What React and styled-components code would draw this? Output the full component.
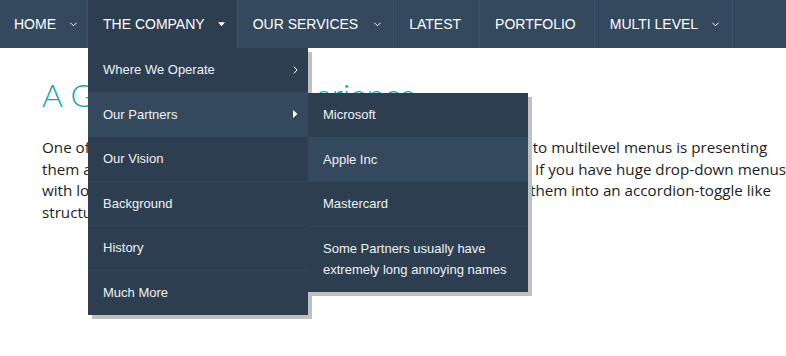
import React from "react";
import styled, { createGlobalStyle } from "styled-components";

const Global = createGlobalStyle`
  html, body { margin: 0; padding: 0; background: #fff; }
  body { font-family: "Liberation Sans", Arial, sans-serif; overflow: hidden; }
  * { box-sizing: border-box; }
`;

const Page = styled.div`
  width: 786px;
  height: 356px;
  position: relative;
  overflow: hidden;
`;

const NavBar = styled.nav`
  height: 48px;
  background: #34495e;
  display: flex;
  position: relative;
  z-index: 5;
`;

const NavItem = styled.div`
  position: relative;
  display: flex;
  align-items: center;
  height: 48px;
  padding: 0 ${(p) => p.$pr}px 0 ${(p) => p.$pl || 15}px;
  border-right: 1px solid #3f546a;
  background: ${(p) => (p.$active ? "#2d3e50" : "transparent")};
  color: #fff;
  font-size: 14px;
  text-transform: uppercase;
  white-space: nowrap;
`;

const Caret = styled.span`
  display: flex;
  align-items: center;
  justify-content: center;
  width: 7px;
  margin-left: ${(p) => p.$gap}px;
`;

const Dropdown = styled.div`
  position: absolute;
  top: ${(p) => p.$top}px;
  left: ${(p) => p.$left}px;
  width: 220px;
  background: #2d3e50;
  box-shadow: 4px 4px 0 #c0c0c0;
  z-index: ${(p) => p.$z || 10};
  text-transform: none;
`;

const MenuItem = styled.div`
  position: relative;
  display: flex;
  align-items: center;
  justify-content: space-between;
  padding: 11.5px 10px 11.5px 15px;
  line-height: 21px;
  font-size: 13px;
  color: #eef2f5;
  background: ${(p) => (p.$hover ? "#34495e" : "transparent")};
  border-bottom: ${(p) => (p.$last ? "none" : "1px solid #34475b")};
  height: ${(p) => (p.$tall ? "auto" : "44.5px")};
  white-space: ${(p) => (p.$tall ? "normal" : "nowrap")};
`;

const Content = styled.main`
  padding: 27px 42px 0;
`;

const Heading = styled.h1`
  margin: 0 0 22px;
  font-family: Lato, "Open Sans", sans-serif;
  font-weight: 300;
  font-size: 32px;
  line-height: 40px;
  color: #1ba3b3;
  white-space: nowrap;
`;

const Para = styled.p`
  margin: 0;
  font-family: "Open Sans", "Noto Sans", sans-serif;
  font-size: 15.2px;
  line-height: 21.5px;
  color: #1e1e1e;
  white-space: nowrap;
`;

const ChevronDown = () => (
  <svg width="7" height="5" viewBox="0 0 7 5">
    <polyline points="0.5,0.8 3.5,3.8 6.5,0.8" fill="none" stroke="#fff" strokeWidth="1" />
  </svg>
);

const TriangleDown = () => (
  <svg width="8" height="5" viewBox="0 0 8 5">
    <polygon points="0,0 8,0 4,4.5" fill="#fff" />
  </svg>
);

const ChevronRight = () => (
  <svg width="5" height="8" viewBox="0 0 5 8">
    <polyline points="0.8,0.5 4,4 0.8,7.5" fill="none" stroke="#fff" strokeWidth="1" />
  </svg>
);

const TriangleRight = () => (
  <svg width="5" height="8" viewBox="0 0 5 8">
    <polygon points="0,0 4.5,4 0,8" fill="#fff" />
  </svg>
);

const mainItems = [
  { label: "Where We Operate", icon: <ChevronRight /> },
  { label: "Our Partners", icon: <TriangleRight />, hover: true },
  { label: "Our Vision" },
  { label: "Background" },
  { label: "History" },
  { label: "Much More" },
];

const subItems = [
  { label: "Microsoft" },
  { label: "Apple Inc", hover: true },
  { label: "Mastercard" },
  { label: "Some Partners usually have extremely long annoying names", tall: true },
];

export default function App() {
  return (
    <Page>
      <Global />
      <NavBar>
        <NavItem $pl={14} $pr={10}>
          Home
          <Caret $gap={14}><ChevronDown /></Caret>
        </NavItem>
        <NavItem $pr={12} $active>
          The Company
          <Caret $gap={13}><TriangleDown /></Caret>
          <Dropdown $top={48} $left={0}>
            {mainItems.map((it, i) => (
              <MenuItem key={it.label} $hover={it.hover} $last={i === mainItems.length - 1}>
                <span>{it.label}</span>
                {it.icon}
              </MenuItem>
            ))}
          </Dropdown>
          <Dropdown $top={93} $left={220} $z={11}>
            {subItems.map((it, i) => (
              <MenuItem key={it.label} $hover={it.hover} $tall={it.tall} $last={i === subItems.length - 1}>
                <span>{it.label}</span>
              </MenuItem>
            ))}
          </Dropdown>
        </NavItem>
        <NavItem $pr={12}>
          Our Services
          <Caret $gap={16}><ChevronDown /></Caret>
        </NavItem>
        <NavItem $pr={18}>Latest</NavItem>
        <NavItem $pr={18}>Portfolio</NavItem>
        <NavItem $pr={13}>
          Multi Level
          <Caret $gap={14}><ChevronDown /></Caret>
        </NavItem>
      </NavBar>
      <Content>
        <Heading>A Great Nested Experience</Heading>
        <Para>
          One of the hardest things when it comes to applying responsive fixes to multilevel menus is presenting
          <br />
          them all in a pleasant and useful way on small screen mobile devices. If you have huge drop-down menus
          <br />
          with lots of nested sub-levels, it would be a good solution to collapse them into an accordion-toggle like
          <br />
          structure.
        </Para>
      </Content>
    </Page>
  );
}
